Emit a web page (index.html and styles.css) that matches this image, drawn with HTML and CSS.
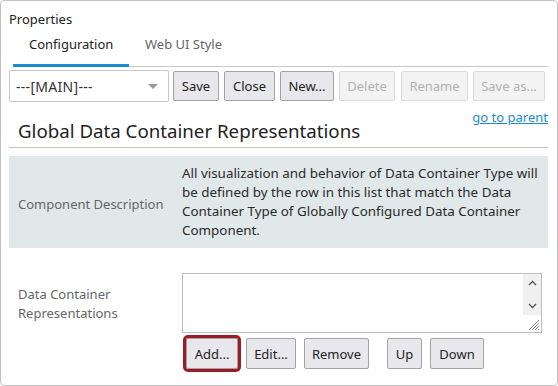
FILE: index.html
```html
<!DOCTYPE html>
<html>
<head>
<meta charset="utf-8">
<link rel="stylesheet" href="styles.css">
</head>
<body>
<div class="frame">
  <div class="title">Properties</div>
  <div class="tabs">
    <div class="tab active">Configuration</div>
    <div class="tab">Web UI Style</div>
  </div>
  <div class="toolbar">
    <div class="select">
      <span>---[MAIN]---</span>
      <span class="caret"></span>
    </div>
    <button class="btn w-save">Save</button>
    <button class="btn w-close">Close</button>
    <button class="btn w-new">New...</button>
    <button class="btn w-delete" disabled>Delete</button>
    <button class="btn w-rename" disabled>Rename</button>
    <button class="btn w-saveas" disabled>Save as...</button>
  </div>
  <div class="heading">
    <h1>Global Data Container Representations</h1>
    <a class="parent" href="#">go to parent</a>
  </div>
  <div class="desc">
    <div class="desc-label">Component Description</div>
    <div class="desc-text">All visualization and behavior of Data Container Type will<br>be defined by the row in this list that match the Data<br>Container Type of Globally Configured Data Container<br>Component.</div>
  </div>
  <div class="field">
    <div class="field-label">Data Container Representations</div>
    <div class="field-body">
      <div class="listbox">
        <div class="list"></div>
        <div class="scroll">
          <div class="track">
            <svg width="9" height="6" viewBox="0 0 9 6"><path d="M1 5 L4.5 1.5 L8 5" fill="none" stroke="#555" stroke-width="1.3"/></svg>
            <svg width="9" height="6" viewBox="0 0 9 6"><path d="M1 1 L4.5 4.5 L8 1" fill="none" stroke="#555" stroke-width="1.3"/></svg>
          </div>
          <div class="grip">
            <svg width="14" height="14" viewBox="0 0 14 14"><path d="M13 3 L3 13 M13 6 L6 13 M13 9 L9 13 M13 12 L12 13" stroke="#888" stroke-width="1"/></svg>
          </div>
        </div>
      </div>
      <div class="actions">
        <button class="btn focus w-add">Add...</button>
        <button class="btn w-edit">Edit...</button>
        <button class="btn w-remove">Remove</button>
        <button class="btn w-up gap">Up</button>
        <button class="btn w-down">Down</button>
      </div>
    </div>
  </div>
</div>
</body>
</html>
```

FILE: styles.css
```css
* { box-sizing: border-box; }
html, body { margin: 0; padding: 0; background: #fff; }
body {
  font-family: "Noto Sans", "Open Sans", sans-serif;
  font-size: 13px;
  color: #222;
}
.frame {
  width: 558px;
  height: 386px;
  border: 1px solid #c2c2c2;
  border-radius: 4px;
  padding: 0 9px 0 8px;
}
.title {
  padding-top: 9px;
  line-height: 18px;
  color: #222;
}
.tabs {
  display: flex;
  margin-left: 4px;
  border-bottom: 1px solid #c8c8c8;
}
.tab {
  width: 116px;
  padding: 7px 0 10px 16px;
  line-height: 18px;
  color: #666;
  border-bottom: 3px solid transparent;
  margin-bottom: -1px;
  height: 39px;
}
.tab.active {
  color: #222;
  border-bottom-color: #1a8bd1;
}
.toolbar {
  display: flex;
  align-items: center;
  margin-top: 3px;
  height: 32px;
}
.select {
  width: 160px;
  height: 32px;
  border: 1px solid #c8c8c8;
  border-radius: 2px;
  display: flex;
  align-items: center;
  justify-content: space-between;
  padding: 0 10px 0 6px;
  color: #333;
  font-size: 14px;
  letter-spacing: 0.3px;
}
.caret {
  width: 0;
  height: 0;
  border-left: 5px solid transparent;
  border-right: 5px solid transparent;
  border-top: 5px solid #999;
  margin-top: 1px;
}
.btn {
  font-family: inherit;
  font-size: 13px;
  height: 30px;
  padding: 0;
  border: 1px solid #a3a3a3;
  border-radius: 2px;
  background: #e8e8ec;
  color: #222;
  margin-left: 5px;
}
.btn[disabled] {
  background: #f3f3f4;
  border-color: #dadada;
  color: #b2b2b2;
}
.w-save { width: 46px; margin-left: 4px; }
.w-close { width: 51px; }
.w-new { width: 54px; }
.w-delete { width: 56px; }
.w-rename { width: 67px; margin-left: 6px; }
.w-saveas { width: 72px; }
.heading {
  display: flex;
  justify-content: space-between;
  align-items: flex-start;
  border-bottom: 1px solid #c0c0c0;
  height: 46px;
}
.heading h1 {
  margin: 16px 0 0 9px;
  font-size: 18.7px;
  font-weight: normal;
  line-height: 26px;
  color: #222;
}
.parent {
  margin-top: 6px;
  line-height: 18px;
  color: #1a8bd1;
  text-decoration: underline;
}
.desc {
  margin-top: 8px;
  height: 92px;
  background: #e0e8ea;
  display: flex;
  align-items: center;
  padding: 0 0 0 9px;
}
.desc-label {
  width: 164px;
  flex: none;
  color: #666;
  margin-top: 3px;
}
.desc-text {
  flex: 1;
  font-size: 13.4px;
  line-height: 19px;
  color: #2a2a2a;
  white-space: nowrap;
}
.field {
  display: flex;
  margin-top: 25px;
  padding-left: 9px;
}
.field-label {
  width: 164px;
  flex: none;
  color: #666;
  line-height: 19px;
  padding-top: 12px;
  padding-right: 40px;
}
.listbox {
  width: 360px;
  height: 60px;
  border: 1px solid #bdbdbd;
  display: flex;
}
.list { flex: 1; }
.scroll {
  width: 18px;
  display: flex;
  flex-direction: column;
}
.track {
  height: 41px;
  background: #f0f0f0;
  display: flex;
  flex-direction: column;
  align-items: center;
  justify-content: space-between;
  padding: 6px 0 6px;
}
.grip {
  flex: 1;
  display: flex;
  align-items: flex-end;
  justify-content: flex-end;
  padding: 0 1px 1px 0;
}
.grip svg { display: block; }
.actions {
  display: flex;
  margin-top: 5px;
  padding-left: 4px;
}
.actions .btn {
  height: 31px;
  margin-left: 0;
  margin-right: 8px;
}
.actions .btn.gap { margin-left: 10px; }
.btn.focus {
  outline: 3px solid #9d1b27;
  outline-offset: 0;
}
.w-add { width: 52px; }
.w-edit { width: 50px; }
.w-remove { width: 65px; }
.w-up { width: 35px; }
.w-down { width: 54px; }
```
